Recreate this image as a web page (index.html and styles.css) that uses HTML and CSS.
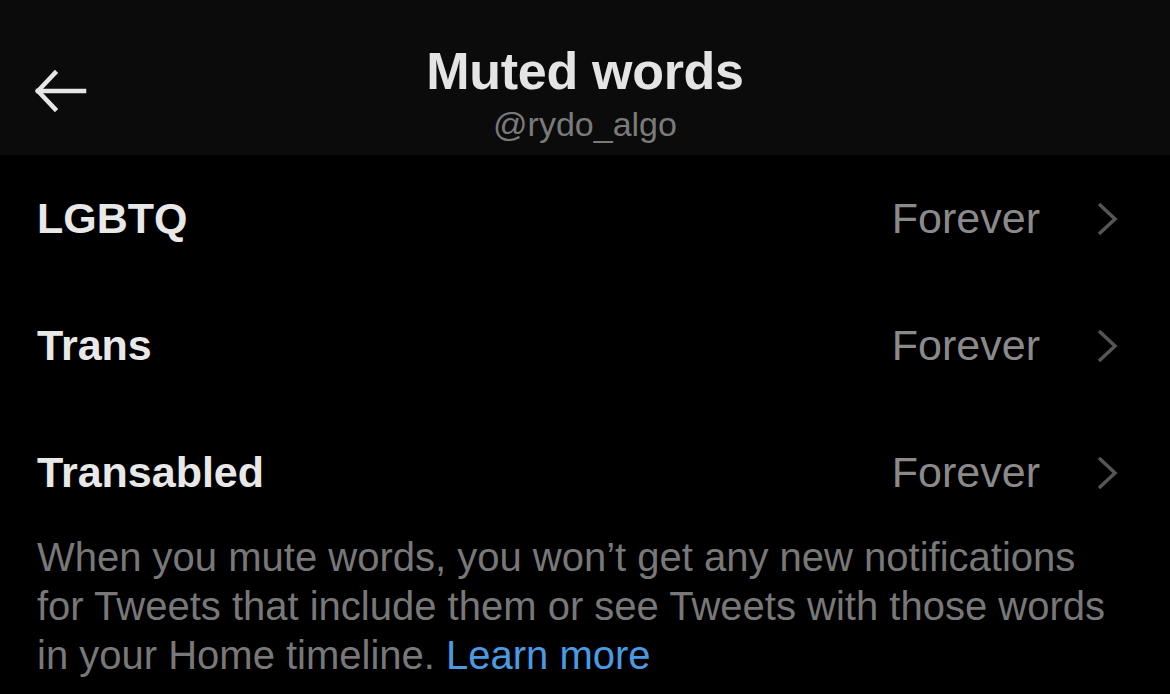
FILE: index.html
```html
<!DOCTYPE html>
<html lang="en">
  <head>
    <meta charset="UTF-8" />
    <meta name="viewport" content="width=device-width, initial-scale=1.0" />
    <title>Muted words</title>
    <link rel="stylesheet" href="styles.css">
  </head>
  <body>
    <div class="screen">
      <div class="top-bar">
        <button class="back-button" aria-label="Back">
          <svg width="54" height="44" viewBox="0 0 54 44" fill="none" stroke="currentColor" stroke-width="4.5" stroke-linecap="square">
            <path d="M4 22 H50"/>
            <path d="M21 4 L4 22 L21 40"/>
          </svg>
        </button>
        <div class="title-block">
          <div class="title">Muted words</div>
          <div class="handle">@rydo_algo</div>
        </div>
      </div>

      <div class="muted-list">
        <div class="muted-row">
          <span class="word">LGBTQ</span>
          <span class="duration">Forever</span>
          <svg class="chevron" width="22" height="36" viewBox="0 0 22 36" fill="none" stroke="currentColor" stroke-width="3.5">
            <path d="M3 3 L19 18 L3 33"/>
          </svg>
        </div>
        <div class="muted-row">
          <span class="word">Trans</span>
          <span class="duration">Forever</span>
          <svg class="chevron" width="22" height="36" viewBox="0 0 22 36" fill="none" stroke="currentColor" stroke-width="3.5">
            <path d="M3 3 L19 18 L3 33"/>
          </svg>
        </div>
        <div class="muted-row">
          <span class="word">Transabled</span>
          <span class="duration">Forever</span>
          <svg class="chevron" width="22" height="36" viewBox="0 0 22 36" fill="none" stroke="currentColor" stroke-width="3.5">
            <path d="M3 3 L19 18 L3 33"/>
          </svg>
        </div>
      </div>

      <p class="note">
        When you mute words, you won’t get any new notifications<br>
        for Tweets that include them or see Tweets with those words<br>
        in your Home timeline. <a href="#" class="learn-more">Learn more</a>
      </p>
    </div>
  </body>
</html>
```

FILE: styles.css
```css
body {
  margin: 0;
  background-color: #000;
  font-family: "Liberation Sans", Arial, sans-serif;
  color: #e6e6e6;
}
.screen {
  width: 1170px;
  height: 694px;
  overflow: hidden;
  display: flex;
  flex-direction: column;
}
.top-bar {
  height: 155px;
  background-color: #0b0b0b;
  display: grid;
  grid-template-columns: 1fr auto 1fr;
  align-items: start;
  box-sizing: border-box;
  padding: 0 34px;
}
.back-button {
  background: none;
  border: none;
  padding: 0;
  margin-top: 69px;
  color: #e6e6e6;
  justify-self: start;
  display: flex;
}
.title-block {
  display: flex;
  flex-direction: column;
  align-items: center;
  padding-top: 43px;
}
.title {
  font-size: 52px;
  font-weight: bold;
  line-height: 56px;
  color: #e4e4e4;
  letter-spacing: -0.3px;
}
.handle {
  font-size: 34px;
  line-height: 44px;
  color: #7a7a7a;
  margin-top: 3px;
}
.muted-list {
  display: flex;
  flex-direction: column;
  padding: 0 52px 0 37px;
}
.muted-row {
  height: 127px;
  display: flex;
  align-items: center;
}
.word {
  flex: 1;
  font-size: 43px;
  font-weight: bold;
  color: #e8e8e8;
}
.duration {
  font-size: 43px;
  color: #8a8a8a;
  margin-right: 56px;
}
.chevron {
  color: #555;
}
.note {
  margin: -3px 0 0;
  padding: 0 37px;
  font-size: 40px;
  line-height: 49px;
  color: #787878;
  white-space: nowrap;
}
.learn-more {
  color: #4a9be3;
  text-decoration: none;
}
```
